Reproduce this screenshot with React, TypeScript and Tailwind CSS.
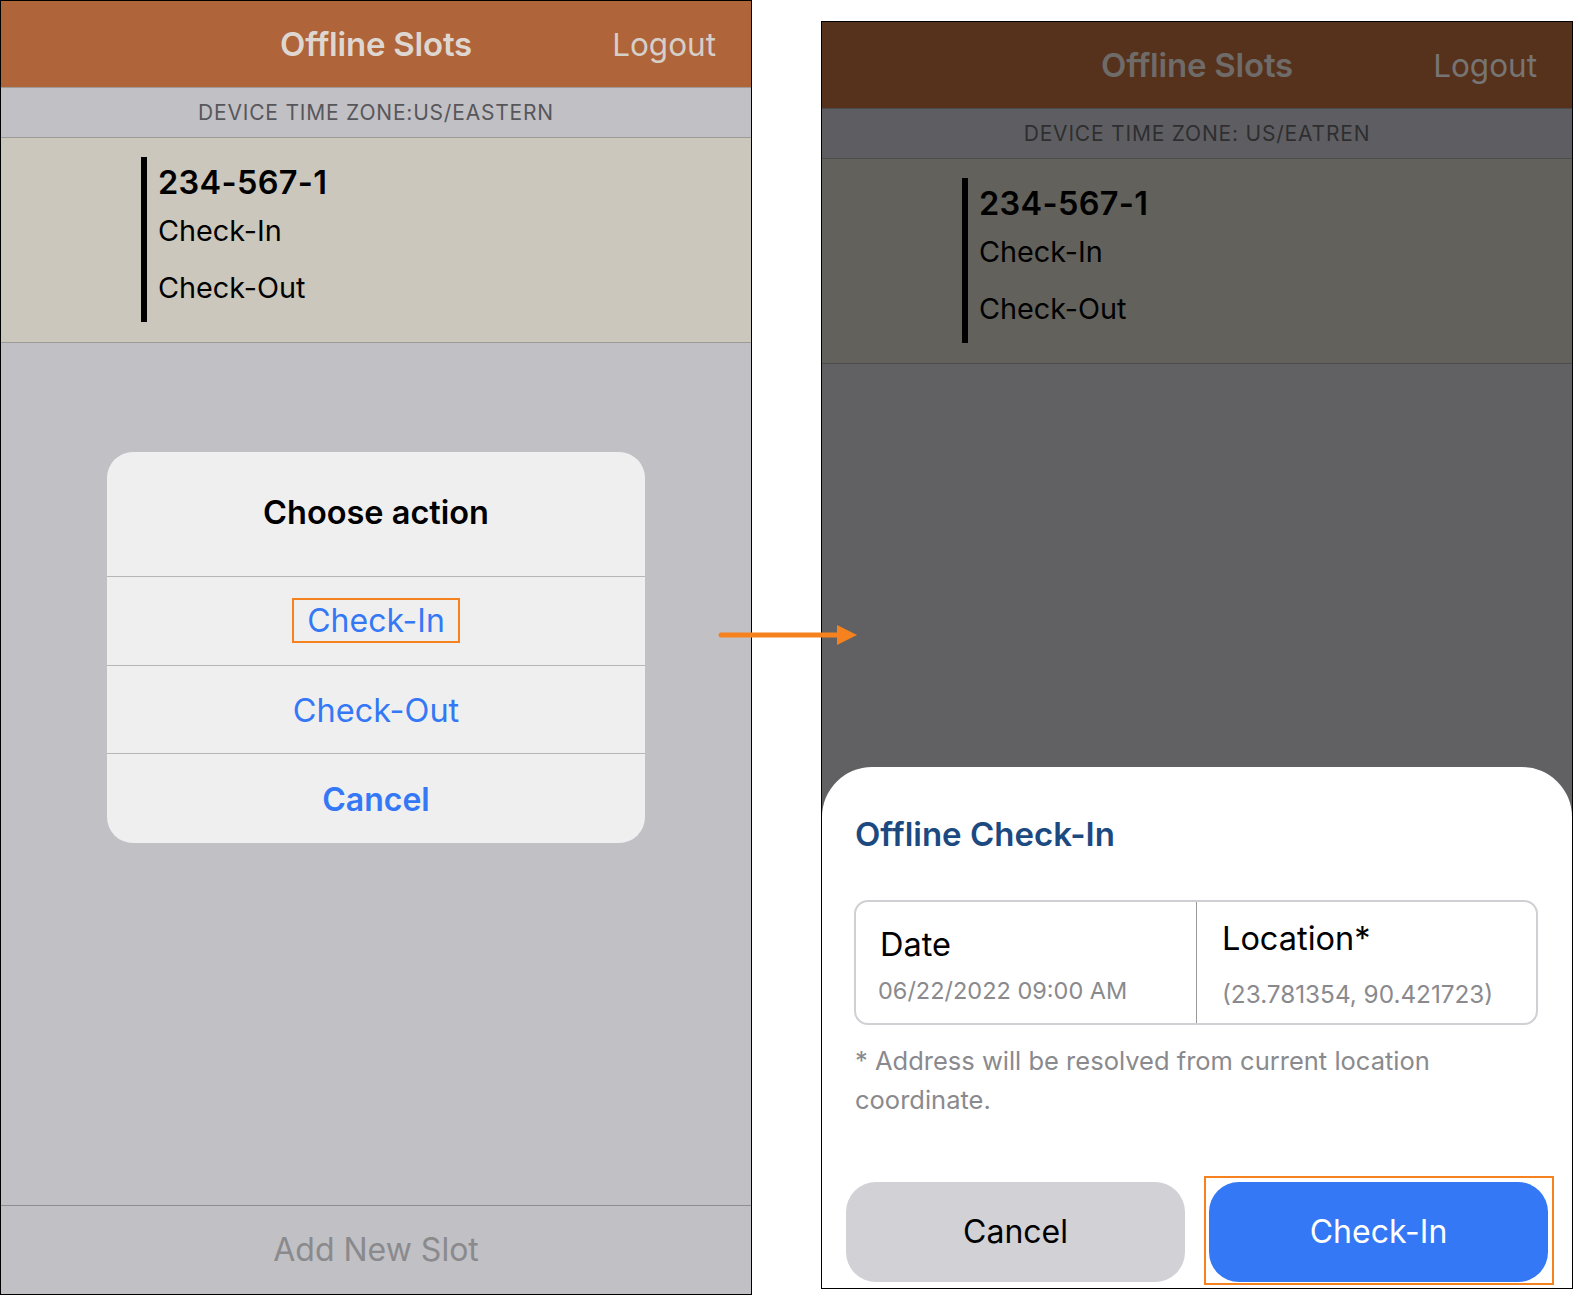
import React from 'react';

// ─── Shared palette per screen (full class strings so Tailwind picks them up) ──

interface Theme {
  header: string;
  title: string;
  logout: string;
  zoneBg: string;
  zoneText: string;
  line: string;
  card: string;
  body: string;
}

const LIGHT: Theme = {
  header: 'bg-[#B0643A]',
  title: 'text-[#DED7D1]',
  logout: 'text-[#D5CFCA]',
  zoneBg: 'bg-[#C1C0C5]',
  zoneText: 'text-[#57575B]',
  line: 'border-[#9C9B98]',
  card: 'bg-[#CBC7BC]',
  body: 'bg-[#C1C0C5]',
};

const DIM: Theme = {
  header: 'bg-[#56321C]',
  title: 'text-[#6E6B69]',
  logout: 'text-[#777574]',
  zoneBg: 'bg-[#5E5E62]',
  zoneText: 'text-[#2E2E30]',
  line: 'border-[#4C4C4C]',
  card: 'bg-[#62615C]',
  body: 'bg-[#616164]',
};

const FONT = "font-['Inter','Noto_Sans',sans-serif]";

function Header({ t }: { t: Theme }) {
  return (
    <div className={`grid grid-cols-[1fr_auto_1fr] items-center h-[87px] pt-[2px] border-b ${t.line} ${t.header}`}>
      <span />
      <span className={`text-[33px] font-semibold tracking-[-0.2px] ${t.title}`}>Offline Slots</span>
      <span className={`justify-self-end pr-[35px] text-[31.5px] ${t.logout}`}>Logout</span>
    </div>
  );
}

function ZoneBar({ t, zone }: { t: Theme; zone: string }) {
  return (
    <div className={`flex items-center justify-center h-[50px] border-b ${t.line} ${t.zoneBg}`}>
      <span className={`text-[21px] tracking-[0.8px] ${t.zoneText}`}>{zone}</span>
    </div>
  );
}

function SlotCard({ t }: { t: Theme }) {
  return (
    <div className={`h-[205px] border-b ${t.line} ${t.card} pl-[140px] pt-[19px]`}>
      <div className="flex">
        <div className="w-[6px] h-[165px] bg-black" />
        <div className="ml-[11px] pt-[2px] text-black">
          <div className="text-[32.5px] font-semibold leading-[48px] tracking-[0.3px]">234-567-1</div>
          <div className="text-[28.8px] leading-[48px]">Check-In</div>
          <div className="mt-[9px] text-[28.8px] leading-[48px]">Check-Out</div>
        </div>
      </div>
    </div>
  );
}

// ─── Left: action chooser ─────────────────────────────────────────────────────

function ChooseScreen() {
  const t = LIGHT;
  return (
    <div className={`w-[752px] h-[1295px] border border-black flex flex-col overflow-hidden ${FONT}`}>
      <Header t={t} />
      <ZoneBar t={t} zone="DEVICE TIME ZONE:US/EASTERN" />
      <SlotCard t={t} />

      <div className={`flex-1 ${t.body} flex justify-center pt-[109px]`}>
        <div className="w-[538px] h-[391px] rounded-[26px] bg-[#EFEFF0] overflow-hidden flex flex-col">
          <div className="h-[124px] pt-[41px] text-center">
            <span className="text-[32.5px] font-semibold leading-[40px] text-black">Choose action</span>
          </div>
          <div className="h-[89px] border-t border-[#B6B6B9] flex items-center justify-center">
            <span className="inline-block border-2 border-[#F5821F] px-[13px] leading-[41px] -mt-[1px] text-[32px] text-[#3478F6]">
              Check-In
            </span>
          </div>
          <div className="h-[88px] pt-[3px] border-t border-[#B6B6B9] flex items-center justify-center">
            <span className="text-[32.5px] text-[#3478F6]">Check-Out</span>
          </div>
          <div className="h-[89px] pt-[3px] border-t border-[#B6B6B9] flex items-center justify-center">
            <span className="text-[32px] font-semibold text-[#3478F6]">Cancel</span>
          </div>
        </div>
      </div>

      <div className={`h-[89px] border-t border-[#8E8E90] ${t.body} flex items-center justify-center`}>
        <span className="text-[32px] text-[#8A8A8D]">Add New Slot</span>
      </div>
    </div>
  );
}

// ─── Right: offline check-in sheet ────────────────────────────────────────────

function CheckInScreen() {
  const t = DIM;
  return (
    <div className={`mt-[21px] w-[752px] h-[1268px] border border-black flex flex-col overflow-hidden ${FONT}`}>
      <Header t={t} />
      <ZoneBar t={t} zone="DEVICE TIME ZONE: US/EATREN" />
      <SlotCard t={t} />

      {/* dimmed backdrop holding the bottom sheet */}
      <div className={`flex-1 ${t.body} flex flex-col justify-end`}>
        <div className="h-[521px] bg-white rounded-t-[50px] flex flex-col">
          <div className="pl-[33px] pt-[47px] text-[33px] font-semibold leading-[40px] text-[#1C4A80]">
            Offline Check-In
          </div>

          <div className="mt-[46px] ml-[32px] mr-[34px] h-[125px] rounded-[14px] border-2 border-[#D0D0D4] grid grid-cols-2">
            <div className="pl-[22px]">
              <div className="mt-[25px] ml-[2px] text-[32.5px] leading-[36px] text-black">Date</div>
              <div className="mt-[13px] text-[23.5px] leading-[30px] text-[#8A8A8E]">06/22/2022 09:00 AM</div>
            </div>
            <div className="border-l border-[#9A9A9A] pl-[25px]">
              <div className="mt-[19px] text-[32.5px] leading-[36px] text-black">Location*</div>
              <div className="mt-[22px] text-[24.3px] leading-[30px] text-[#8A8A8E]">(23.781354, 90.421723)</div>
            </div>
          </div>

          <p className="mt-[16px] mx-[33px] text-[25.5px] leading-[39px] text-[#8A8A8E]">
            * Address will be resolved from current location coordinate.
          </p>

          <div className="mt-auto mb-[6px] px-[24px] grid grid-cols-2 gap-[24px]">
            <button className="h-[100px] rounded-[30px] bg-[#D1D1D6] text-[32px] text-black">Cancel</button>
            <button className="relative h-[100px] rounded-[30px] bg-[#3478F6] text-[32px] text-white">
              Check-In
              <span className="absolute -left-[5px] -top-[6px] -right-[6px] -bottom-[3px] border-2 border-[#F5821F] pointer-events-none" />
            </button>
          </div>
        </div>
      </div>
    </div>
  );
}

export default function App() {
  return (
    <div className="relative w-[1580px] h-[1300px] bg-white flex items-start">
      <ChooseScreen />
      <div className="ml-[69px]">
        <CheckInScreen />
      </div>

      {/* transition arrow, drawn over both screens */}
      <svg className="absolute left-[716px] top-[622px]" width="144" height="26" viewBox="0 0 144 26" fill="none">
        <line x1="5" y1="13" x2="124" y2="13" stroke="#F5821F" strokeWidth="5" strokeLinecap="round" />
        <path d="M121 3 L141 13 L121 23 Z" fill="#F5821F" />
      </svg>
    </div>
  );
}
